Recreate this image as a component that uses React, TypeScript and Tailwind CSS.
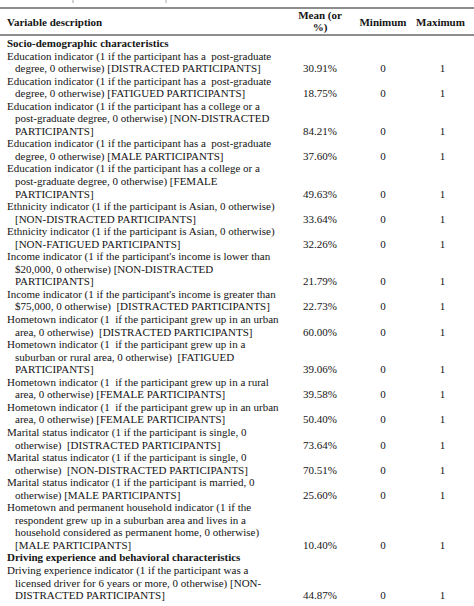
import React from "react"

type Row = { lines: string[], mean: string }

const socio: Row[] = [
  { lines: ["Education indicator (1 if the participant has a  post-graduate", "degree, 0 otherwise) [DISTRACTED PARTICIPANTS]"], mean: "30.91%" },
  { lines: ["Education indicator (1 if the participant has a  post-graduate", "degree, 0 otherwise) [FATIGUED PARTICIPANTS]"], mean: "18.75%" },
  { lines: ["Education indicator (1 if the participant has a college or a", "post-graduate degree, 0 otherwise) [NON-DISTRACTED", "PARTICIPANTS]"], mean: "84.21%" },
  { lines: ["Education indicator (1 if the participant has a  post-graduate", "degree, 0 otherwise) [MALE PARTICIPANTS]"], mean: "37.60%" },
  { lines: ["Education indicator (1 if the participant has a college or a", "post-graduate degree, 0 otherwise) [FEMALE", "PARTICIPANTS]"], mean: "49.63%" },
  { lines: ["Ethnicity indicator (1 if the participant is Asian, 0 otherwise)", "[NON-DISTRACTED PARTICIPANTS]"], mean: "33.64%" },
  { lines: ["Ethnicity indicator (1 if the participant is Asian, 0 otherwise)", "[NON-FATIGUED PARTICIPANTS]"], mean: "32.26%" },
  { lines: ["Income indicator (1 if the participant's income is lower than", "$20,000, 0 otherwise) [NON-DISTRACTED", "PARTICIPANTS]"], mean: "21.79%" },
  { lines: ["Income indicator (1 if the participant's income is greater than", "$75,000, 0 otherwise)  [DISTRACTED PARTICIPANTS]"], mean: "22.73%" },
  { lines: ["Hometown indicator (1  if the participant grew up in an urban", "area, 0 otherwise)  [DISTRACTED PARTICIPANTS]"], mean: "60.00%" },
  { lines: ["Hometown indicator (1  if the participant grew up in a", "suburban or rural area, 0 otherwise)  [FATIGUED", "PARTICIPANTS]"], mean: "39.06%" },
  { lines: ["Hometown indicator (1  if the participant grew up in a rural", "area, 0 otherwise) [FEMALE PARTICIPANTS]"], mean: "39.58%" },
  { lines: ["Hometown indicator (1  if the participant grew up in an urban", "area, 0 otherwise) [FEMALE PARTICIPANTS]"], mean: "50.40%" },
  { lines: ["Marital status indicator (1 if the participant is single, 0", "otherwise)  [DISTRACTED PARTICIPANTS]"], mean: "73.64%" },
  { lines: ["Marital status indicator (1 if the participant is single, 0", "otherwise)  [NON-DISTRACTED PARTICIPANTS]"], mean: "70.51%" },
  { lines: ["Marital status indicator (1 if the participant is married, 0", "otherwise) [MALE PARTICIPANTS]"], mean: "25.60%" },
  { lines: ["Hometown and permanent household indicator (1 if the", "respondent grew up in a suburban area and lives in a", "household considered as permanent home, 0 otherwise)", "[MALE PARTICIPANTS]"], mean: "10.40%" },
]

const driving: Row[] = [
  { lines: ["Driving experience indicator (1 if the participant was a", "licensed driver for 6 years or more, 0 otherwise) [NON-", "DISTRACTED PARTICIPANTS]"], mean: "44.87%" },
]

const grid = "grid grid-cols-[290px_60px_66px_50px]"

function DataRow({ row }: { row: Row }) {
  return (
    <div className={`${grid} items-end`}>
      <div className="pl-[7px]">
        {row.lines.map((l, i) => (
          <div key={i} className={`whitespace-pre ${i > 0 ? "pl-[8px]" : ""}`}>{l}</div>
        ))}
      </div>
      <div className="text-center">{row.mean}</div>
      <div className="text-center">0</div>
      <div className="text-center pl-[3px]">1</div>
    </div>
  )
}

function Section({ title }: { title: string }) {
  return <div className="pl-[7px] font-bold whitespace-pre">{title}</div>
}

export default function App() {
  return (
    <div className="w-[474px] h-[606px] overflow-hidden bg-white text-[#141414] text-[11px] leading-[12.55px] font-['Liberation_Serif',serif]">
      <div className="flex h-[7px] items-start">
        <div className="ml-[72px] w-[2px] h-[3px] bg-[#cfcfcf]" />
        <div className="ml-[91px] w-[2px] h-[3px] bg-[#d6d6d6]" />
      </div>
      <div className="border-t-2 border-b-2 border-[#8d8d8d]">
        <div className={`${grid} h-[25px] items-center font-bold`}>
          <div className="pl-[7px] pt-[1px]">Variable description</div>
          <div className="text-center leading-[11.5px]">
            <div>Mean (or</div>
            <div>%)</div>
          </div>
          <div className="text-center pt-[1px]">Minimum</div>
          <div className="text-center pt-[1px] pr-[4px]">Maximum</div>
        </div>
      </div>
      <div className="pt-[1px]">
        <Section title="Socio-demographic characteristics" />
        {socio.map((r, i) => <DataRow key={i} row={r} />)}
        <Section title="Driving experience and behavioral characteristics" />
        {driving.map((r, i) => <DataRow key={i} row={r} />)}
      </div>
    </div>
  )
}
